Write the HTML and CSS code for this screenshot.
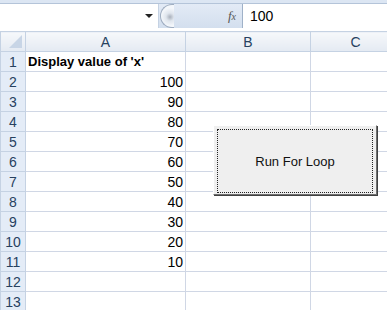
FILE: index.html
```html
<!DOCTYPE html>
<html lang="en">
<head>
  <meta charset="UTF-8">
  <title>For Loop - Sheet1</title>
  <link rel="stylesheet" href="styles.css">
</head>
<body>

<div class="ribbon-edge"></div>
<div class="formula-bar">
  <div class="name-box"><span class="drop-arrow"></span></div>
  <div class="fx-area">
    <span class="grip"></span>
    <span class="fx"><i>f</i><i>x</i></span>
  </div>
  <div class="formula-input">100</div>
</div>

<div class="sheet">
  <table class="grid">
    <colgroup>
      <col class="c-hdr"><col class="c-a"><col class="c-b"><col class="c-c">
    </colgroup>
    <thead>
      <tr>
        <th class="corner"><span class="tri"></span></th>
        <th>A</th><th>B</th><th>C</th>
      </tr>
    </thead>
    <tbody id="rows"></tbody>
  </table>

  <button class="macro-btn" type="button"><span>Run For Loop</span></button>
</div>

<script>
  // fill rows 1..13, values from the loop 100 down to 10
  const body = document.getElementById('rows');
  for (let r = 1; r <= 13; r++) {
    let a = '';
    if (r === 1) a = '<td class="bold">Display value of \'x\'</td>';
    else if (r <= 11) a = '<td class="num">' + (120 - r * 10) + '</td>';
    else a = '<td></td>';
    body.innerHTML += '<tr><th>' + r + '</th>' + a + '<td></td><td></td></tr>';
  }
</script>

</body>
</html>
```

FILE: styles.css
```css
body { margin: 0; font-family: "Liberation Sans", Arial, sans-serif; background: #fff; overflow: hidden; }

.ribbon-edge { height: 3px; background: #dce6f3; border-bottom: 1px solid #b4c4d9; }

.formula-bar { display: flex; height: 24px; background: linear-gradient(#e3ebf6, #d3dfee); }
.name-box { width: 158px; background: #fff; border-right: 1px solid #c5d2e3; position: relative; }
.drop-arrow { position: absolute; left: 145px; top: 10px; border-left: 4px solid transparent; border-right: 4px solid transparent; border-top: 4px solid #222; }
.fx-area { width: 83px; display: flex; align-items: center; justify-content: space-between; padding-right: 6px; box-sizing: border-box; }
.grip { width: 14px; height: 24px; margin-left: 1px; border-radius: 12px 0 0 12px; background: radial-gradient(circle at 9px 12px, #a9b0bb 0, #dfe5ed 4px, #f4f7fb 9px); border: 1px solid #9fadc0; border-right: none; box-sizing: border-box; }
.fx { font-family: "Liberation Serif", serif; font-size: 13px; color: #555; }
.fx i:last-child { font-size: 10px; }
.formula-input { flex: 1; background: #fff; border-left: 1px solid #9fb1c8; font-size: 14px; line-height: 24px; padding-left: 7px; color: #000; }

.sheet { position: relative; margin-top: 3px; }

.grid { border-collapse: collapse; table-layout: fixed; width: 400px; font-size: 14px; }
.c-hdr { width: 25px; }
.c-a { width: 160px; }
.c-b { width: 125px; }
.c-c { width: 90px; }
.grid th, .grid td { height: 19px; padding: 0; border: 1px solid #d0d7e5; white-space: nowrap; overflow: hidden; }
.grid thead th { background: linear-gradient(#f6f8fb, #e4eaf2); color: #27415f; font-weight: normal; border-color: #c5d2e3; }
.grid tbody th { background: #e4ecf7; color: #27415f; font-weight: normal; border-color: #c5d2e3; }
.grid td { padding: 0 2px; }
.grid .num { text-align: right; }
.grid .bold { font-weight: bold; font-size: 13px; }

.corner { position: relative; }
.tri { position: absolute; right: 3px; bottom: 3px; border-left: 13px solid transparent; border-bottom: 13px solid #c8d5e6; }

.macro-btn { position: absolute; left: 213px; top: 94px; width: 164px; height: 70px; padding: 3px; background: #efefef; border: 1px solid #fff; border-right-color: #6f6f6f; border-bottom-color: #6f6f6f; box-shadow: 1px 1px 0 #404040; font-family: "Liberation Sans", Arial, sans-serif; font-size: 13px; color: #111; cursor: pointer; }
.macro-btn span { display: flex; align-items: center; justify-content: center; height: 100%; border: 1px dotted #222; }
```
